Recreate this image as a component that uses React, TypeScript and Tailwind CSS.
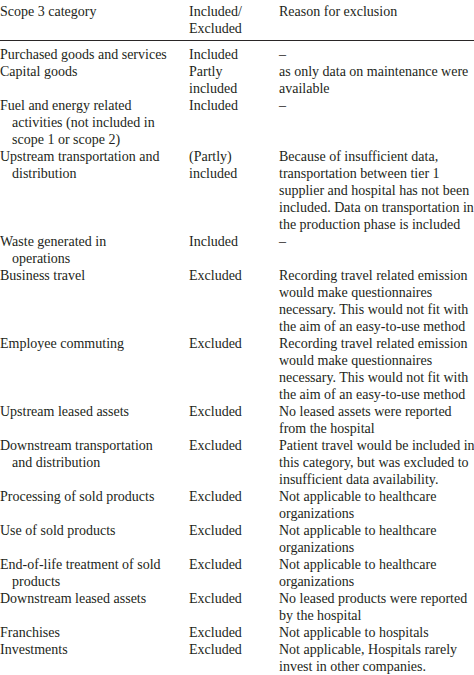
import React from "react";

type Row = { a: string[]; b: string[]; c: string[] };

const rows: Row[] = [
  { a: ["Purchased goods and services"], b: ["Included"], c: ["–"] },
  { a: ["Capital goods"], b: ["Partly", "included"], c: ["as only data on maintenance were", "available"] },
  { a: ["Fuel and energy related", "activities (not included in", "scope 1 or scope 2)"], b: ["Included"], c: ["–"] },
  {
    a: ["Upstream transportation and", "distribution"],
    b: ["(Partly)", "included"],
    c: [
      "Because of insufficient data,",
      "transportation between tier 1",
      "supplier and hospital has not been",
      "included. Data on transportation in",
      "the production phase is included",
    ],
  },
  { a: ["Waste generated in", "operations"], b: ["Included"], c: ["–"] },
  {
    a: ["Business travel"],
    b: ["Excluded"],
    c: [
      "Recording travel related emission",
      "would make questionnaires",
      "necessary. This would not fit with",
      "the aim of an easy-to-use method",
    ],
  },
  {
    a: ["Employee commuting"],
    b: ["Excluded"],
    c: [
      "Recording travel related emission",
      "would make questionnaires",
      "necessary. This would not fit with",
      "the aim of an easy-to-use method",
    ],
  },
  { a: ["Upstream leased assets"], b: ["Excluded"], c: ["No leased assets were reported", "from the hospital"] },
  {
    a: ["Downstream transportation", "and distribution"],
    b: ["Excluded"],
    c: ["Patient travel would be included in", "this category, but was excluded to", "insufficient data availability."],
  },
  { a: ["Processing of sold products"], b: ["Excluded"], c: ["Not applicable to healthcare", "organizations"] },
  { a: ["Use of sold products"], b: ["Excluded"], c: ["Not applicable to healthcare", "organizations"] },
  { a: ["End-of-life treatment of sold", "products"], b: ["Excluded"], c: ["Not applicable to healthcare", "organizations"] },
  { a: ["Downstream leased assets"], b: ["Excluded"], c: ["No leased products were reported", "by the hospital"] },
  { a: ["Franchises"], b: ["Excluded"], c: ["Not applicable to hospitals"] },
  { a: ["Investments"], b: ["Excluded"], c: ["Not applicable, Hospitals rarely", "invest in other companies."] },
];

function Lines({ lines, hang }: { lines: string[]; hang?: boolean }) {
  return (
    <div className="flex flex-col">
      {lines.map((l, i) => (
        <span key={i} className={hang && i > 0 ? "whitespace-nowrap pl-[12px]" : "whitespace-nowrap"}>
          {l}
        </span>
      ))}
    </div>
  );
}

export default function App() {
  return (
    <div
      className="w-[474px] h-[675px] overflow-hidden bg-white text-[14px] leading-[17px] text-[#231f20]"
      style={{ fontFamily: '"Liberation Serif", "Times New Roman", serif' }}
    >
      <div className="grid grid-cols-[189px_90px_1fr] pt-[3px]">
        <Lines lines={["Scope 3 category"]} />
        <Lines lines={["Included/", "Excluded"]} />
        <Lines lines={["Reason for exclusion"]} />
      </div>
      <div className="mt-[3px] h-px w-full bg-[#2a2627]" />
      <div className="grid grid-cols-[189px_90px_1fr] pt-[5px]">
        {rows.map((r, i) => (
          <React.Fragment key={i}>
            <Lines lines={r.a} hang />
            <Lines lines={r.b} />
            <Lines lines={r.c} />
          </React.Fragment>
        ))}
      </div>
    </div>
  );
}
